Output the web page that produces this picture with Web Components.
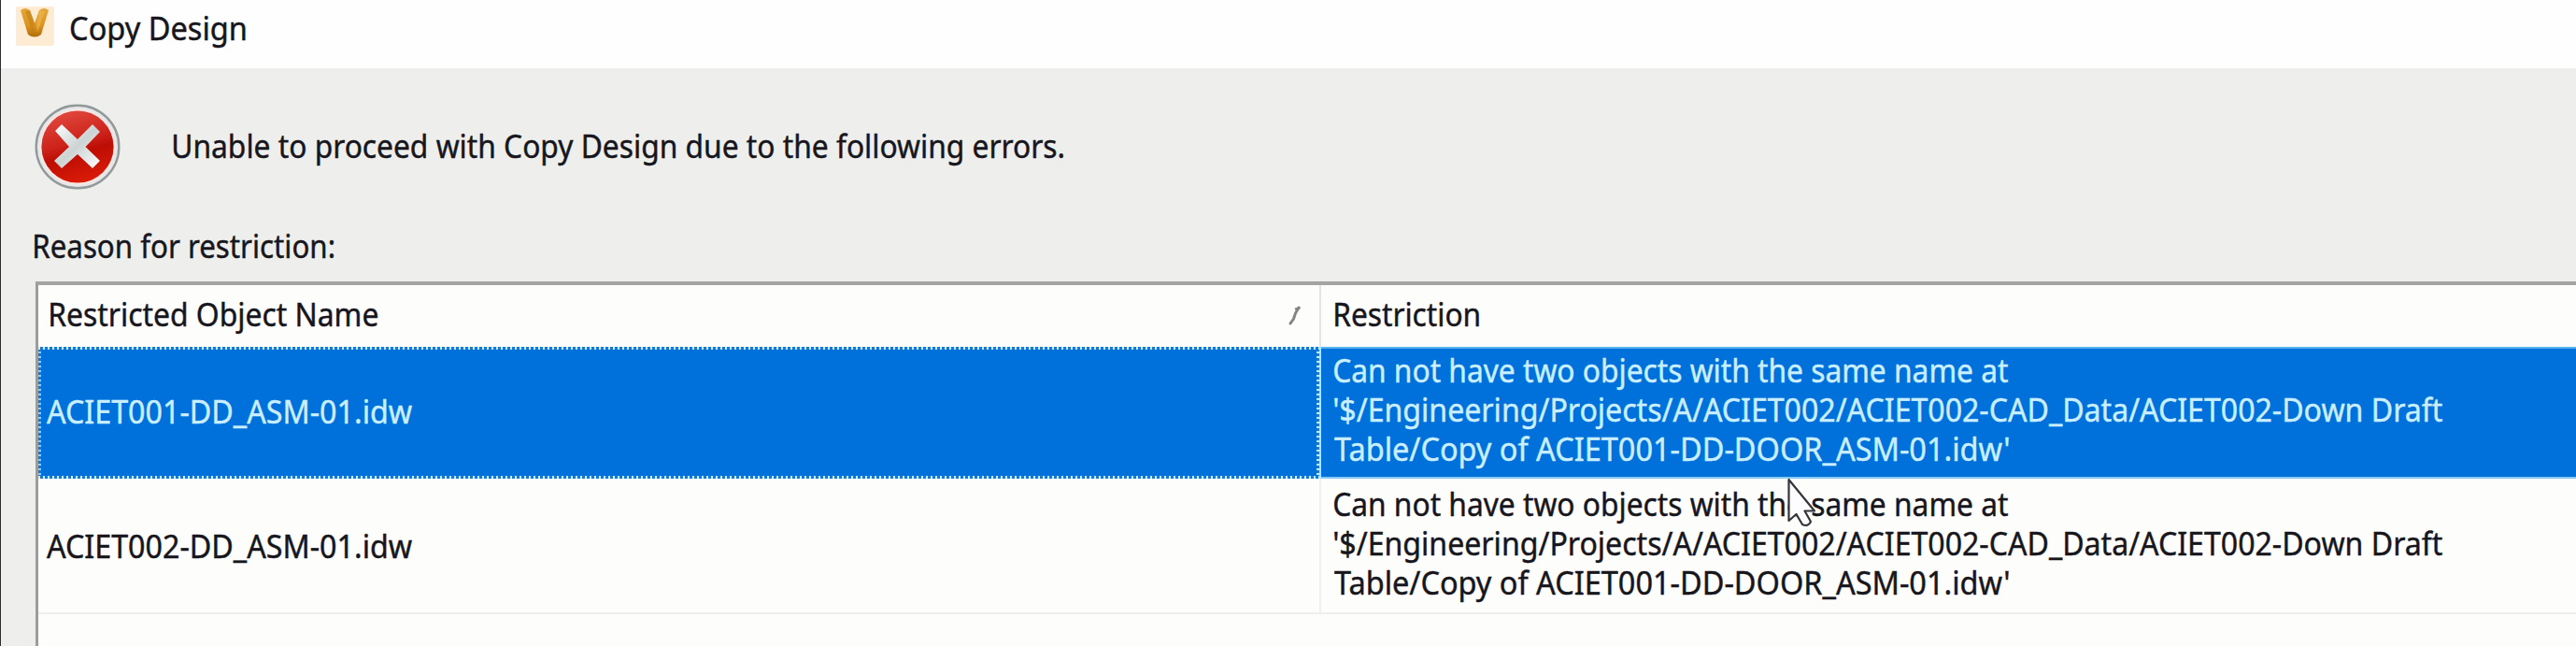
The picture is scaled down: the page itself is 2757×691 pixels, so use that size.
<!DOCTYPE html>
<html lang="en">
<head>
<meta charset="utf-8">
<title>Copy Design</title>
<style>
html, body { margin: 0; height: 100%; overflow: hidden; }
body { font-family: "Noto Sans", "Open Sans", sans-serif; font-size: 34.5px; color: #16161c; }
</style>
</head>
<body>
<copy-dialog></copy-dialog>
<script>
const define = (name, html, ready) => customElements.define(name, class extends HTMLElement {
  connectedCallback() {
    if (this.shadowRoot) return;
    const t = document.createElement('template');
    t.innerHTML = html;
    this.attachShadow({ mode: 'open' }).append(t.content.cloneNode(true));
    if (ready) ready.call(this);
  }
});

// A single line of text condensed to the width given in its "w" attribute.
define('ui-text', `<style>
  :host { display: block; height: 42px; line-height: 42px; white-space: pre; flex: none; }
  span { display: inline-block; transform-origin: 0 0; -webkit-text-stroke: .45px currentColor; }
</style><span><slot></slot></span>`, function () {
  const w = +this.getAttribute('w');
  const size = this.getAttribute('size') || 34.5;
  this.style.width = w + 'px';
  this.style.fontSize = size + 'px';
  const c = document.createElement('canvas').getContext('2d');
  c.font = size + 'px "Noto Sans", "Open Sans", sans-serif';
  const m = c.measureText(this.textContent);
  const k = w / (m.actualBoundingBoxRight + m.actualBoundingBoxLeft);
  this.shadowRoot.querySelector('span').style.transform =
    `translateX(${m.actualBoundingBoxLeft * k}px) scaleX(${k})`;
});

define('vault-icon', `<style>:host { display: block; width: 42px; height: 44px; } svg { display: block; }</style>
<svg width="42" height="44" viewBox="0 0 42 44">
  <defs><linearGradient id="g" x1="0" y1="0" x2="0" y2="1"><stop offset="0" stop-color="#e3a63c"/><stop offset=".6" stop-color="#dc9420"/><stop offset="1" stop-color="#b06c08"/></linearGradient></defs>
  <rect x="0" y="1" width="41" height="42" rx="2" fill="#fdebd3"/>
  <path d="M5 5 Q10 1 15 5 L20 19 L25 5 Q30 1 35 5 L27 31 Q20 36 13 31Z" fill="url(#g)"/>
  <path d="M15 5 L20 19 L18 29 L10 6Z" fill="#c07d14" opacity=".55"/>
  <path d="M25 5 L22 19 L23 29 L31 6Z" fill="#efb950" opacity=".6"/>
</svg>`);

define('error-icon', `<style>:host { display: block; width: 92px; height: 92px; } svg { display: block; }</style>
<svg width="92" height="92" viewBox="0 0 92 92">
  <defs>
    <linearGradient id="r" x1=".3" y1="0" x2=".6" y2="1"><stop offset="0" stop-color="#e1493f"/><stop offset=".45" stop-color="#cc2118"/><stop offset=".6" stop-color="#bd0d04"/><stop offset="1" stop-color="#dc1c08"/></linearGradient>
    <linearGradient id="x" x1="0" y1="0" x2="1" y2="1"><stop offset="0" stop-color="#fff"/><stop offset=".5" stop-color="#ccd3d3"/><stop offset="1" stop-color="#fff"/></linearGradient>
  </defs>
  <circle cx="46" cy="46" r="44.3" fill="#e6e7e7" stroke="#92999b" stroke-width="2.4"/>
  <circle cx="46" cy="46" r="40.5" fill="#fbe5e2"/>
  <circle cx="46" cy="46" r="38.6" fill="url(#r)"/>
  <path d="M29 22 L46 38 L62 22 L70 30 L54.500 46 L70 61 L62 69 L46 54 L29 69 L21 61 L37 46 L22 29Z" fill="url(#x)"/>
</svg>`);

define('sort-mark', `<style>:host { display: block; width: 14px; height: 22px; } svg { display: block; }</style>
<svg width="14" height="22" viewBox="0 0 14 22" fill="none">
  <path d="M2 20 L5.500 15 L7.500 9 L11 3" stroke="#858585" stroke-width="3" stroke-linecap="round"/>
  <path d="M8 4.500 L11.500 3.500" stroke="#858585" stroke-width="2.500" stroke-linecap="round"/>
</svg>`);

define('mouse-pointer', `<style>:host { display: block; width: 32px; height: 54px; } svg { display: block; }</style>
<svg width="32" height="54" viewBox="0 0 32 54">
  <path d="M3.500 2 V46 L11.500 39 L18 50 Q24 53 27 47 L20.500 35.500 H31Z" fill="#fdfdff" stroke="#34343a" stroke-width="2.200" stroke-linejoin="round"/>
</svg>`);

define('title-bar', `<style>
  :host { display: flex; box-sizing: border-box; height: 73px; padding: 6px 0 0 16px; background: #fefefe; align-items: flex-start; gap: 17px; }
</style><vault-icon></vault-icon><slot></slot>`);

define('error-banner', `<style>
  :host { display: flex; height: 128px; padding: 38px 0 0 36px; align-items: flex-start; box-sizing: border-box; }
</style><error-icon></error-icon><slot></slot>`);

define('grid-header', `<style>
  :host { display: grid; grid-template-columns: 1373px 1fr; height: 66px; background: #fdfdfc; }
  .a { display: flex; justify-content: space-between; padding: 10px 19px 0 13px; border-right: 2px solid #e6e3e4; }
  sort-mark { margin-top: 11px; }
  .b { padding: 10px 0 0 15px; }
</style><div class="a"><slot name="name"></slot><sort-mark></sort-mark></div><div class="b"><slot name="reason"></slot></div>`);

define('grid-row', `<style>
  :host { display: grid; grid-template-columns: 1373px 1fr; height: 145px; box-sizing: border-box; border-bottom: 2px solid #eeeeed; background: #fdfdfc; }
  .a { display: flex; align-items: center; padding: 0 0 0 9px; border-right: 2px solid #f1efef; }
  .b { padding: 6px 0 0 14px; }
  :host([selected]) { height: 141px; background: #0070db; color: #c9efff; border-top: 2px solid #55b2ee; border-bottom: 2px solid #85caf3; }
  :host([selected]) .a {
    margin: -2px 0 -2px; padding-bottom: 4px; border-right-color: #b5e2fb;
    background:
      repeating-linear-gradient(90deg, #c5ebff 0 2.5px, #1679d4 2.5px 5px) 0 0 / 100% 3px no-repeat,
      repeating-linear-gradient(90deg, #c5ebff 0 2.5px, #1679d4 2.5px 5px) 0 100% / 100% 3px no-repeat,
      repeating-linear-gradient(180deg, #8dd0fa 0 2.5px, #1679d4 2.5px 5px) 0 0 / 3px 100% no-repeat,
      repeating-linear-gradient(180deg, #c5ebff 0 2.5px, #1679d4 2.5px 5px) 100% 0 / 3px 100% no-repeat;
  }
  :host([selected]) .b { padding-top: 2px; }
</style><div class="a"><slot name="name"></slot></div><div class="b"><slot></slot></div>`);

define('restriction-grid', `<style>
  :host { display: block; height: 390px; box-sizing: border-box; border-top: 4px solid #a4a4a3; border-left: 3px solid #9c9c9c; background: #fdfdfc; }
</style><slot></slot>`);

define('copy-dialog', `<style>
  :host { display: block; position: relative; box-sizing: border-box; height: 691px; border-left: 1px solid #2e2e30; background: #eeeeec; overflow: hidden; }
  .title { margin-top: 3px; }
  .msg { margin: 24px 0 0 57px; }
  .label { height: 100px; box-sizing: border-box; padding: 41px 0 0 36px; }
  restriction-grid { margin-left: 37px; }
  mouse-pointer { position: absolute; left: 1910px; top: 511px; }
</style>
<title-bar><ui-text class="title" w="187" size="34">Copy Design</ui-text></title-bar>
<error-banner><ui-text class="msg" w="952">Unable to proceed with Copy Design due to the following errors.</ui-text></error-banner>
<div class="label"><ui-text w="320">Reason for restriction:</ui-text></div>
<restriction-grid>
  <grid-header>
    <ui-text slot="name" w="350">Restricted Object Name</ui-text>
    <ui-text slot="reason" w="154">Restriction</ui-text>
  </grid-header>
  <grid-row selected>
    <ui-text slot="name" w="391">ACIET001-DD_ASM-01.idw</ui-text>
    <ui-text w="721">Can not have two objects with the same name at</ui-text>
    <ui-text w="1186">'$/Engineering/Projects/A/ACIET002/ACIET002-CAD_Data/ACIET002-Down Draft</ui-text>
    <ui-text w="722">Table/Copy of ACIET001-DD-DOOR_ASM-01.idw'</ui-text>
  </grid-row>
  <grid-row>
    <ui-text slot="name" w="391">ACIET002-DD_ASM-01.idw</ui-text>
    <ui-text w="721">Can not have two objects with the same name at</ui-text>
    <ui-text w="1186">'$/Engineering/Projects/A/ACIET002/ACIET002-CAD_Data/ACIET002-Down Draft</ui-text>
    <ui-text w="722">Table/Copy of ACIET001-DD-DOOR_ASM-01.idw'</ui-text>
  </grid-row>
</restriction-grid>
<mouse-pointer></mouse-pointer>`);
</script>
</body>
</html>
